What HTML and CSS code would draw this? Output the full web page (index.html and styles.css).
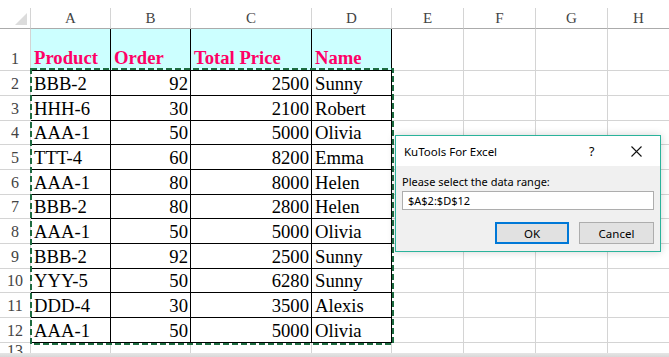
FILE: index.html
```html
<!DOCTYPE html>
<html>
<head>
<meta charset="utf-8">
<link rel="stylesheet" href="styles.css">
</head>
<body>
<div class="page">
  <div class="sheet">
    <div class="corner"><svg width="31" height="21" viewBox="0 0 31 21"><polygon points="27,5 27,17 15,17" fill="#dcdcdc"/></svg></div>
    <div class="ch">A</div><div class="ch">B</div><div class="ch">C</div><div class="ch">D</div><div class="ch">E</div><div class="ch">F</div><div class="ch">G</div><div class="ch">H</div>

    <div class="rh">1</div>
    <div class="c t hd">Product</div><div class="c t hd">Order</div><div class="c t hd">Total Price</div><div class="c t hd">Name</div>
    <div class="c"></div><div class="c"></div><div class="c"></div><div class="c"></div>

    <div class="rh">2</div><div class="c t">BBB-2</div><div class="c t n">92</div><div class="c t n">2500</div><div class="c t">Sunny</div><div class="c"></div><div class="c"></div><div class="c"></div><div class="c"></div>
    <div class="rh">3</div><div class="c t">HHH-6</div><div class="c t n">30</div><div class="c t n">2100</div><div class="c t">Robert</div><div class="c"></div><div class="c"></div><div class="c"></div><div class="c"></div>
    <div class="rh">4</div><div class="c t">AAA-1</div><div class="c t n">50</div><div class="c t n">5000</div><div class="c t">Olivia</div><div class="c"></div><div class="c"></div><div class="c"></div><div class="c"></div>
    <div class="rh">5</div><div class="c t">TTT-4</div><div class="c t n">60</div><div class="c t n">8200</div><div class="c t">Emma</div><div class="c"></div><div class="c"></div><div class="c"></div><div class="c"></div>
    <div class="rh">6</div><div class="c t">AAA-1</div><div class="c t n">80</div><div class="c t n">8000</div><div class="c t">Helen</div><div class="c"></div><div class="c"></div><div class="c"></div><div class="c"></div>
    <div class="rh">7</div><div class="c t">BBB-2</div><div class="c t n">80</div><div class="c t n">2800</div><div class="c t">Helen</div><div class="c"></div><div class="c"></div><div class="c"></div><div class="c"></div>
    <div class="rh">8</div><div class="c t">AAA-1</div><div class="c t n">50</div><div class="c t n">5000</div><div class="c t">Olivia</div><div class="c"></div><div class="c"></div><div class="c"></div><div class="c"></div>
    <div class="rh">9</div><div class="c t">BBB-2</div><div class="c t n">92</div><div class="c t n">2500</div><div class="c t">Sunny</div><div class="c"></div><div class="c"></div><div class="c"></div><div class="c"></div>
    <div class="rh">10</div><div class="c t">YYY-5</div><div class="c t n">50</div><div class="c t n">6280</div><div class="c t">Sunny</div><div class="c"></div><div class="c"></div><div class="c"></div><div class="c"></div>
    <div class="rh">11</div><div class="c t">DDD-4</div><div class="c t n">30</div><div class="c t n">3500</div><div class="c t">Alexis</div><div class="c"></div><div class="c"></div><div class="c"></div><div class="c"></div>
    <div class="rh">12</div><div class="c t">AAA-1</div><div class="c t n">50</div><div class="c t n">5000</div><div class="c t">Olivia</div><div class="c"></div><div class="c"></div><div class="c"></div><div class="c"></div>
    <div class="rh">13</div><div class="c"></div><div class="c"></div><div class="c"></div><div class="c"></div><div class="c"></div><div class="c"></div><div class="c"></div><div class="c"></div>
  </div>

  <svg class="marquee" width="364" height="277" viewBox="0 0 364 277">
    <rect x="1" y="1" width="362" height="275" fill="none" stroke="#1d6b40" stroke-width="2" stroke-dasharray="6 3"/>
  </svg>

  <div class="bottom-edge"></div>

  <div class="dialog">
    <div class="titlebar">
      <span class="title">KuTools For Excel</span>
      <span class="help">?</span>
      <svg class="close" width="11" height="11" viewBox="0 0 11 11"><path d="M0.5 0.5 L10.5 10.5 M10.5 0.5 L0.5 10.5" stroke="#111" stroke-width="1.1" fill="none"/></svg>
    </div>
    <div class="dbody">
      <div class="label">Please select the data range:</div>
      <div class="input">$A$2:$D$12</div>
      <div class="buttons">
        <div class="btn ok">OK</div>
        <div class="btn">Cancel</div>
      </div>
    </div>
  </div>
</div>
</body>
</html>
```

FILE: styles.css
```css
* { box-sizing: border-box; }
html, body { margin: 0; padding: 0; background: #fff; }
.page {
  position: relative;
  width: 669px;
  height: 357px;
  overflow: hidden;
  padding-top: 8px;
}
.sheet {
  display: grid;
  grid-template-columns: 31px 80px 80px 121px 80px 72px 72px 72px 62px;
  grid-template-rows: 21px 42px 25px 25px 24px 25px 25px 24px 25px 25px 24px 25px 25px 20px;
  font-family: "Liberation Serif", "Times New Roman", serif;
}
.corner {
  border-right: 1px solid #d4d4d4;
  border-bottom: 1px solid #ababab;
}
.corner svg { display: block; }
.ch {
  border-right: 1px solid #d4d4d4;
  border-bottom: 1px solid #ababab;
  font-size: 15px;
  color: #444;
  display: flex;
  align-items: center;
  justify-content: center;
  padding-top: 1px;
}
.rh {
  border-right: 1px solid #d4d4d4;
  border-bottom: 1px solid #d4d4d4;
  font-size: 16px;
  color: #444;
  display: flex;
  align-items: flex-end;
  justify-content: center;
  line-height: 20px;
  padding-bottom: 1px;
}
.c {
  border-right: 1px solid #d4d4d4;
  border-bottom: 1px solid #d4d4d4;
  font-size: 18.67px;
  color: #000;
  display: flex;
  align-items: flex-end;
  line-height: 22px;
  padding: 0 2px 0 3px;
  white-space: nowrap;
}
.c.t {
  border-right-color: #000;
  border-bottom-color: #000;
}
.c.n { justify-content: flex-end; }
.c.hd {
  background: #ccffff;
  color: #ff0066;
  font-weight: bold;
  padding-bottom: 1px;
}
.marquee {
  position: absolute;
  left: 30px;
  top: 68px;
}
.bottom-edge {
  position: absolute;
  left: 0;
  right: 0;
  bottom: 0;
  height: 4px;
  background: linear-gradient(#e6e6e6, #d8d8d8);
}
.dialog {
  position: absolute;
  left: 395px;
  top: 135px;
  width: 266px;
  height: 117px;
  border: 1px solid #2ab39b;
  background: #f0f0f0;
  box-shadow: 0 0 8px rgba(0, 0, 0, 0.18);
  font-family: "Noto Sans", "Open Sans", sans-serif;
  font-size: 11px;
  color: #000;
  display: flex;
  flex-direction: column;
}
.titlebar {
  height: 30px;
  background: #fff;
  display: flex;
  align-items: center;
  padding-left: 8px;
}
.title { flex: 1; font-size: 11.5px; }
.help { width: 14px; font-size: 12.5px; margin-right: 28px; }
.close { margin-right: 18px; }
.dbody {
  padding: 8px 6px 0 6px;
  display: flex;
  flex-direction: column;
}
.label { line-height: 15px; }
.input {
  margin-top: 2px;
  height: 19px;
  background: #fff;
  border: 1px solid #adadad;
  line-height: 17px;
  padding-left: 5px;
}
.buttons {
  margin-top: 12px;
  display: flex;
  justify-content: flex-end;
  gap: 10px;
}
.btn {
  width: 75px;
  height: 22px;
  border: 1px solid #adadad;
  background: #e1e1e1;
  display: flex;
  align-items: center;
  justify-content: center;
  font-size: 11.5px;
}
.btn.ok {
  width: 74px;
  border: 2px solid #0078d7;
}
```
